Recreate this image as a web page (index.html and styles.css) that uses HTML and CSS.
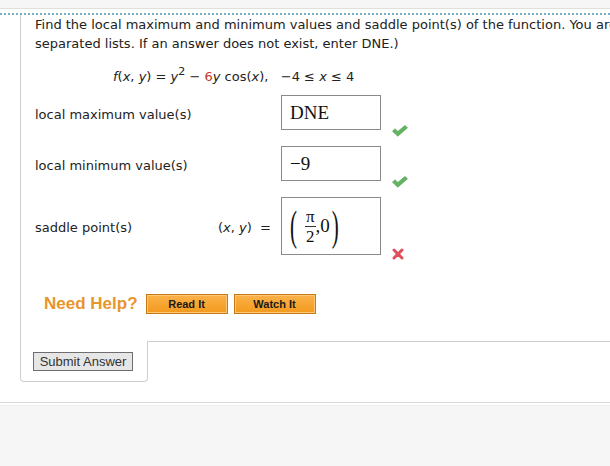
FILE: index.html
```html
<!DOCTYPE html>
<html>
<head>
<meta charset="utf-8">
<link rel="stylesheet" href="styles.css">
</head>
<body>
<div class="topbar"></div>
<div class="question">
  <div class="panel">
    <div class="panel-body">
      <p class="prompt"><span class="line1">Find the local maximum and minimum values and saddle point(s) of the function. You are encouraged to use a calculator or computer to graph the function with a domain and viewpoint that reveals all the important aspects of the function. (Enter your answers as comma-</span><br>separated lists. If an answer does not exist, enter DNE.)</p>
      <div class="formula"><i>f</i>(<i>x</i>, <i>y</i>) = <i>y</i><sup>2</sup> − <span class="red">6</span><i>y</i> cos(<i>x</i>),&nbsp;&nbsp; −4 ≤ <i>x</i> ≤ 4</div>
      <div class="answers">
        <div class="label">local maximum value(s)</div>
        <div class="xy"></div>
        <div class="box"><span class="val">DNE</span></div>
        <div class="mark">
          <svg width="16" height="12" viewBox="0 0 16 12"><path d="M0.5 6.2 L3 3.8 L5.8 6.4 L13 0.5 L15.5 2.8 L5.8 11.2 Z" fill="#63b463" stroke="#4e9a4e" stroke-width="0.6"/></svg>
        </div>

        <div class="label">local minimum value(s)</div>
        <div class="xy"></div>
        <div class="box"><span class="val">−9</span></div>
        <div class="mark">
          <svg width="16" height="12" viewBox="0 0 16 12"><path d="M0.5 6.2 L3 3.8 L5.8 6.4 L13 0.5 L15.5 2.8 L5.8 11.2 Z" fill="#63b463" stroke="#4e9a4e" stroke-width="0.6"/></svg>
        </div>

        <div class="label">saddle point(s)</div>
        <div class="xy">(<i>x</i>, <i>y</i>)&nbsp; =</div>
        <div class="box tall">
          <span class="paren">(</span>
          <span class="frac"><span class="num">π</span><span class="den">2</span></span><span class="tuple">,0</span>
          <span class="paren">)</span>
        </div>
        <div class="mark cross">
          <svg width="12" height="12" viewBox="0 0 12 12"><path d="M2 2 L10 10 M10 2 L2 10" stroke="#e0505c" stroke-width="3" stroke-linecap="round"/></svg>
        </div>
      </div>
      <div class="help">
        <span class="need">Need Help?</span>
        <button class="orange">Read It</button>
        <button class="orange">Watch It</button>
      </div>
    </div>
    <div class="footer">
      <div class="submit-tab"><button class="submit">Submit Answer</button></div>
      <div class="filler"></div>
    </div>
  </div>
</div>
<div class="bottom"></div>
</body>
</html>
```

FILE: styles.css
```css
html, body {
  margin: 0;
  padding: 0;
  overflow: hidden;
  background: #fff;
}
body {
  font-family: "DejaVu Sans", Verdana, sans-serif;
  font-size: 13px;
  color: #222;
}
.topbar {
  height: 8px;
  background: #f6f6f6;
  border-bottom: 1px solid #e0e0e0;
}
.question {
  margin-top: 4px;
  border-top: 2px dotted #76aecd;
}
.panel {
  margin-left: 20px;
  overflow: hidden;
}
.panel-body {
  border-left: 1px solid #cfcfcf;
  padding: 0 0 27px 14px;
}
.prompt {
  margin: 0;
  line-height: 19px;
  white-space: nowrap;
}
.formula {
  margin-top: 14px;
  padding-left: 78px;
  line-height: 19px;
  white-space: nowrap;
}
.formula sup {
  font-size: 11px;
  line-height: 0;
  vertical-align: 6px;
}
.red { color: #c0392b; }
.answers {
  margin-top: 9px;
  display: grid;
  grid-template-columns: 183px 63px 100px auto;
  row-gap: 16px;
  align-items: center;
}
.label {
  padding-top: 3px;
}
.xy {
  padding-top: 3px;
}
.box {
  box-sizing: border-box;
  height: 35px;
  border: 1px solid #8a8a8a;
  padding-left: 8px;
  display: flex;
  align-items: center;
  font-family: "Liberation Serif", "Times New Roman", serif;
  font-size: 19px;
  color: #111;
}
.box.tall {
  height: 58px;
  padding-left: 7px;
}
.paren {
  font-size: 21px;
  display: inline-block;
  transform: scaleY(2.05);
  font-weight: normal;
  line-height: 1;
  margin: 0 1px;
}
.frac {
  display: inline-flex;
  flex-direction: column;
  align-items: center;
  margin-left: 7px;
  font-size: 17px;
  line-height: 1;
}
.num {
  border-bottom: 1px solid #333;
  padding: 0 1px 1px;
}
.den {
  padding-top: 1px;
}
.tuple {
  font-size: 19px;
  margin-right: 1px;
}
.mark {
  align-self: end;
  margin-left: 11px;
  margin-bottom: -7px;
  line-height: 0;
}
.mark.cross {
  margin-bottom: -5px;
}
.help {
  margin-top: 39px;
  margin-left: 9px;
  display: flex;
  align-items: center;
  gap: 6px;
}
.need {
  font-family: "Liberation Sans", Arial, sans-serif;
  font-weight: bold;
  font-size: 17px;
  color: #e8952c;
  margin-right: 2px;
}
.orange {
  width: 82px;
  height: 20px;
  padding: 0;
  border: 1px solid #c77a12;
  box-shadow: inset 0 0 0 1px #fcc877;
  background: linear-gradient(#fbb24a, #f39a1e);
  font-family: "Liberation Sans", Arial, sans-serif;
  font-weight: bold;
  font-size: 11px;
  color: #1a1a1a;
}
.footer {
  display: flex;
}
.submit-tab {
  box-sizing: border-box;
  width: 128px;
  height: 41px;
  border: 1px solid #cfcfcf;
  border-top: none;
  border-radius: 0 0 4px 4px;
  padding: 11px 0 0 12px;
}
.submit {
  width: 100px;
  height: 19px;
  padding: 0;
  border: 1px solid #6e6e6e;
  background: #e6e6e6;
  font-family: "Liberation Sans", Arial, sans-serif;
  font-size: 13px;
  color: #333;
  line-height: 17px;
}
.filler {
  flex: 1;
  border-top: 1px solid #cfcfcf;
}
.bottom {
  margin-top: 20px;
  height: 80px;
  background: #f6f6f6;
  border-top: 1px solid #d9d9d9;
  box-shadow: inset 0 2px 0 #fff, inset 0 3px 0 #ececec;
}
```
